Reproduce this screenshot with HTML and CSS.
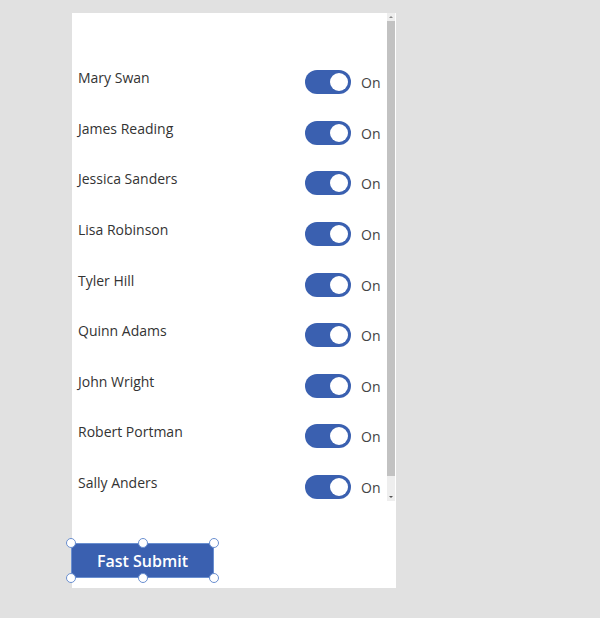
FILE: index.html
```html
<!DOCTYPE html>
<html>
<head>
<meta charset="utf-8">
<link rel="stylesheet" href="styles.css">
</head>
<body>
<div class="panel">
  <div class="list">
    <div class="rows">
      <div class="row"><span class="name">Mary Swan</span><span class="ctl"><span class="toggle"><span class="knob"></span></span><span class="state">On</span></span></div>
      <div class="row"><span class="name">James Reading</span><span class="ctl"><span class="toggle"><span class="knob"></span></span><span class="state">On</span></span></div>
      <div class="row"><span class="name">Jessica Sanders</span><span class="ctl"><span class="toggle"><span class="knob"></span></span><span class="state">On</span></span></div>
      <div class="row"><span class="name">Lisa Robinson</span><span class="ctl"><span class="toggle"><span class="knob"></span></span><span class="state">On</span></span></div>
      <div class="row"><span class="name">Tyler Hill</span><span class="ctl"><span class="toggle"><span class="knob"></span></span><span class="state">On</span></span></div>
      <div class="row"><span class="name">Quinn Adams</span><span class="ctl"><span class="toggle"><span class="knob"></span></span><span class="state">On</span></span></div>
      <div class="row"><span class="name">John Wright</span><span class="ctl"><span class="toggle"><span class="knob"></span></span><span class="state">On</span></span></div>
      <div class="row"><span class="name">Robert Portman</span><span class="ctl"><span class="toggle"><span class="knob"></span></span><span class="state">On</span></span></div>
      <div class="row"><span class="name">Sally Anders</span><span class="ctl"><span class="toggle"><span class="knob"></span></span><span class="state">On</span></span></div>
    </div>
    <div class="scrollbar">
      <div class="arrow up"></div>
      <div class="thumb"></div>
      <div class="track"></div>
      <div class="arrow down"></div>
    </div>
  </div>
  <div class="btnwrap">
    <button class="submit">Fast Submit</button>
    <span class="h tl"></span><span class="h tm"></span><span class="h tr"></span>
    <span class="h bl"></span><span class="h bm"></span><span class="h br"></span>
  </div>
</div>
</body>
</html>
```

FILE: styles.css
```css
html, body {
  margin: 0;
  padding: 0;
  background: #e1e1e1;
  font-family: "Open Sans", "Noto Sans", sans-serif;
}
.panel {
  margin: 13px 0 0 72px;
  width: 324px;
  height: 575px;
  background: #ffffff;
  display: flex;
  flex-direction: column;
}
.list {
  position: relative;
  height: 488px;
}
.rows {
  padding-top: 43.7px;
  padding-left: 6px;
  padding-right: 15px;
}
.row {
  height: 50.625px;
  display: flex;
  align-items: center;
  justify-content: space-between;
}
.name {
  font-size: 14px;
  color: #333333;
  margin-bottom: 9px;
}
.ctl {
  display: flex;
  align-items: center;
  gap: 10px;
}
.toggle {
  width: 46px;
  height: 24px;
  border-radius: 12px;
  background: #3a60b0;
  display: flex;
  align-items: center;
  justify-content: flex-end;
  padding-right: 3px;
  box-sizing: border-box;
}
.knob {
  width: 18px;
  height: 18px;
  border-radius: 50%;
  background: #ffffff;
}
.state {
  font-size: 14px;
  color: #444444;
  width: 20px;
  padding-top: 1px;
}
.scrollbar {
  position: absolute;
  top: 0;
  right: 1px;
  width: 8px;
  height: 488px;
  display: flex;
  flex-direction: column;
  background: #eeeeee;
}
.arrow {
  height: 8px;
  position: relative;
}
.arrow::after {
  content: "";
  position: absolute;
  left: 2px;
  width: 0;
  height: 0;
  border-left: 2px solid transparent;
  border-right: 2px solid transparent;
}
.arrow.up::after {
  top: 3px;
  border-bottom: 2px solid #888888;
}
.arrow.down::after {
  top: 3px;
  border-top: 2px solid #555555;
}
.thumb {
  height: 455px;
  background: #c2c2c2;
}
.track {
  flex: 1;
}
.btnwrap {
  position: relative;
  margin: 42px 0 0 -1px;
  width: 143px;
  height: 35px;
}
.submit {
  width: 143px;
  height: 35px;
  border: 1px solid #6a8fd0;
  background: #3a60b0;
  color: #ffffff;
  font-family: "Open Sans", "Noto Sans", sans-serif;
  font-weight: 600;
  font-size: 16px;
  padding: 0;
  margin: 0;
  display: block;
}
.h {
  position: absolute;
  width: 10px;
  height: 10px;
  border: 1.5px solid #6a8fd0;
  border-radius: 50%;
  background: #ffffff;
  box-sizing: border-box;
}
.tl { left: -5px; top: -5px; }
.tm { left: 66.5px; top: -5px; }
.tr { right: -5px; top: -5px; }
.bl { left: -5px; bottom: -5px; }
.bm { left: 66.5px; bottom: -5px; }
.br { right: -5px; bottom: -5px; }
```
